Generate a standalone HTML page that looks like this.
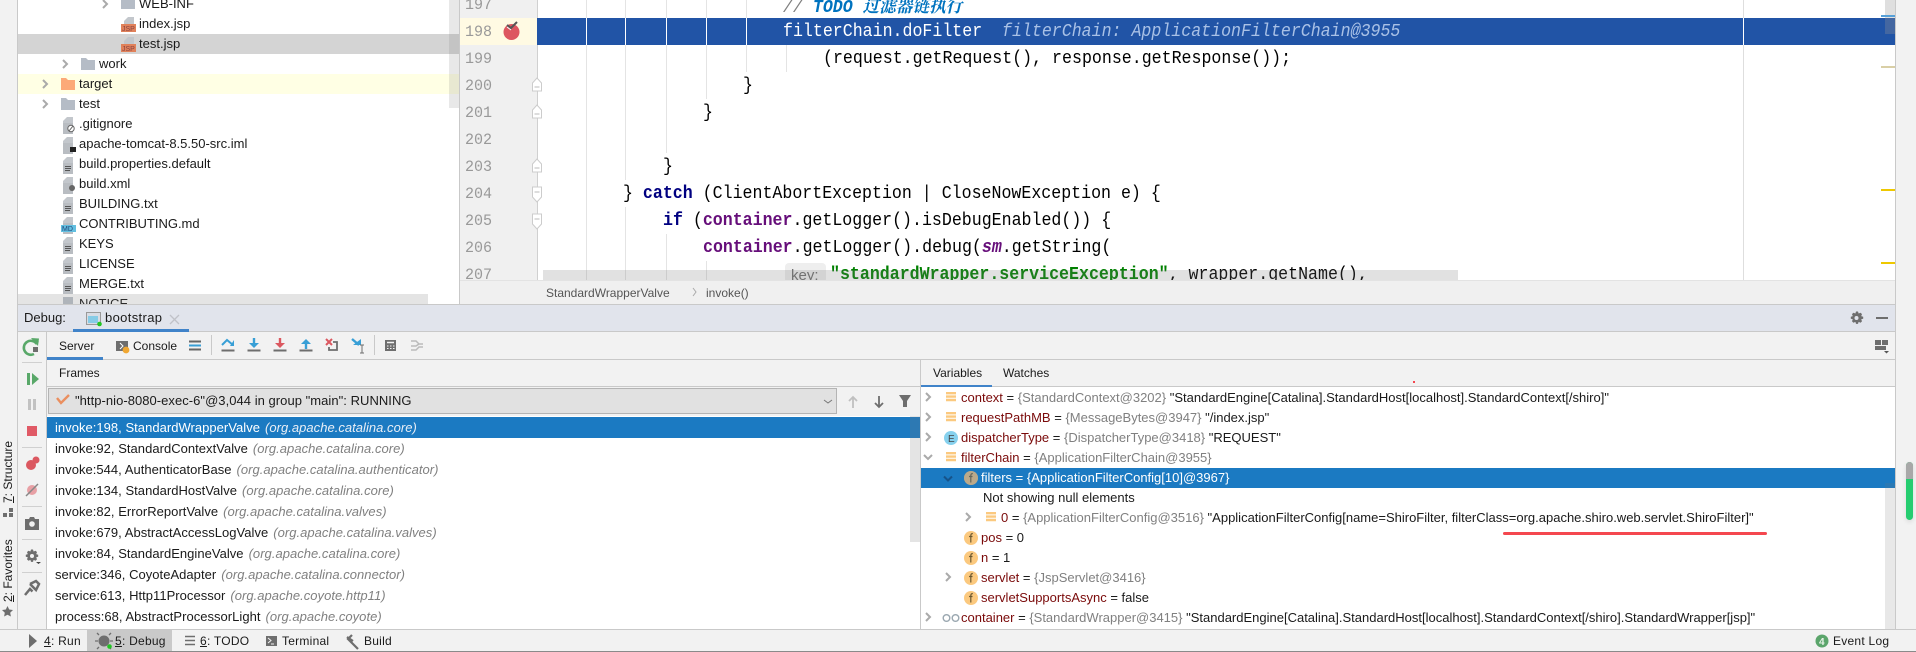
<!DOCTYPE html>
<html><head><meta charset="utf-8"><style>
*{margin:0;padding:0;box-sizing:border-box}
html,body{width:1916px;height:652px;overflow:hidden;background:#f2f2f2}
body{position:relative;font:13px/20px "Liberation Sans","Noto Sans CJK SC",sans-serif;color:#1a1a1a}
.b{position:absolute}
.t{position:absolute;white-space:pre;height:20px;line-height:20px}
.st{font-size:12px;letter-spacing:.25px}
.c{position:absolute;white-space:pre;font:18px/27px "Liberation Mono","Noto Sans CJK SC",monospace;color:#000;height:27px;margin-top:1px;transform:scaleX(.922);transform-origin:0 0}
.n{position:absolute;left:465px;font:16px/27px "Liberation Mono",monospace;color:#999;height:27px;margin-top:1px;transform:scaleX(.94);transform-origin:0 0}
.k{color:#000080;font-weight:700}.f{color:#660e7a;font-weight:700}
.i{font-style:italic;color:#808080}
.fr{position:absolute;left:55px;white-space:pre;height:21px;line-height:21px;letter-spacing:.03px}
.fr i{color:#808080;margin-left:5px}
.v{position:absolute;white-space:pre;height:20px;line-height:20px;margin-top:1px}
.v u{text-decoration:none;color:#7a0a0a}.v s{text-decoration:none;color:#808080}
svg{position:absolute;left:0;top:0}
u.ul{text-decoration:underline;color:inherit}
</style></head><body>

<!-- project tree -->
<div class="b" style="left:18px;top:0;width:441px;height:304px;background:#fff"></div>
<div class="b" style="left:18px;top:34px;width:441px;height:20px;background:#d4d4d4"></div>
<div class="b" style="left:18px;top:74px;width:441px;height:20px;background:#ffffe4"></div>
<div class="b" style="left:449px;top:0;width:10px;height:108px;background:rgba(120,120,120,.17)"></div>
<div class="b" style="left:17px;top:0;width:1px;height:630px;background:#c9c9c9"></div>
<div class="b" style="left:459px;top:0;width:1px;height:304px;background:#c9c9c9"></div>
<div class="t" style="left:139px;top:-6px">WEB-INF</div>
<div class="t" style="left:139px;top:14px">index.jsp</div>
<div class="t" style="left:139px;top:34px">test.jsp</div>
<div class="t" style="left:99px;top:54px">work</div>
<div class="t" style="left:79px;top:74px">target</div>
<div class="t" style="left:79px;top:94px">test</div>
<div class="t" style="left:79px;top:114px">.gitignore</div>
<div class="t" style="left:79px;top:134px">apache-tomcat-8.5.50-src.iml</div>
<div class="t" style="left:79px;top:154px">build.properties.default</div>
<div class="t" style="left:79px;top:174px">build.xml</div>
<div class="t" style="left:79px;top:194px">BUILDING.txt</div>
<div class="t" style="left:79px;top:214px">CONTRIBUTING.md</div>
<div class="t" style="left:79px;top:234px">KEYS</div>
<div class="t" style="left:79px;top:254px">LICENSE</div>
<div class="t" style="left:79px;top:274px">MERGE.txt</div>
<div class="b" style="left:18px;top:294px;width:441px;height:10px;overflow:hidden"><div class="t" style="left:61px;top:0">NOTICE</div></div>
<div class="b" style="left:18px;top:294px;width:410px;height:10px;background:rgba(120,120,120,.2)"></div>

<!-- editor -->
<div class="b" style="left:460px;top:0;width:77px;height:280px;background:#f0f0f0"></div>
<div class="b" style="left:460px;top:18px;width:77px;height:27px;background:#fffae3"></div>
<div class="b" style="left:537px;top:0;width:1358px;height:280px;background:#fff;border-left:1px solid #d0d0d0"></div>
<div class="b" style="left:537px;top:18px;width:1358px;height:27px;background:#2154a6"></div>
<div class="b" style="left:1743px;top:0;width:1px;height:280px;background:#dedede"></div>
<div class="b" style="left:1743px;top:18px;width:1px;height:27px;background:#fff"></div>

<!-- indent guides -->
<div class="b" style="left:586px;top:0;width:1px;height:280px;background:#e4e4e4"></div>
<div class="b" style="left:625px;top:0;width:1px;height:180px;background:#e4e4e4"></div>
<div class="b" style="left:625px;top:207px;width:1px;height:73px;background:#e4e4e4"></div>
<div class="b" style="left:666px;top:0;width:1px;height:153px;background:#e4e4e4"></div>
<div class="b" style="left:666px;top:234px;width:1px;height:46px;background:#e4e4e4"></div>
<div class="b" style="left:706px;top:0;width:1px;height:99px;background:#e4e4e4"></div>
<div class="b" style="left:706px;top:261px;width:1px;height:19px;background:#e4e4e4"></div>
<div class="b" style="left:746px;top:0;width:1px;height:72px;background:#e4e4e4"></div>
<div class="b" style="left:786px;top:45px;width:1px;height:27px;background:#e4e4e4"></div>
<div class="b" style="left:586px;top:18px;width:1px;height:27px;background:#fff"></div>
<div class="b" style="left:625px;top:18px;width:1px;height:27px;background:#fff"></div>
<div class="b" style="left:666px;top:18px;width:1px;height:27px;background:#fff"></div>
<div class="b" style="left:706px;top:18px;width:1px;height:27px;background:#fff"></div>
<div class="b" style="left:746px;top:18px;width:1px;height:27px;background:#fff"></div>

<div class="n" style="top:-9px">197</div>
<div class="n" style="top:18px">198</div>
<div class="n" style="top:45px">199</div>
<div class="n" style="top:72px">200</div>
<div class="n" style="top:99px">201</div>
<div class="n" style="top:126px">202</div>
<div class="n" style="top:153px">203</div>
<div class="n" style="top:180px">204</div>
<div class="n" style="top:207px">205</div>
<div class="n" style="top:234px">206</div>
<div class="b" style="left:460px;top:261px;width:1400px;height:19px;overflow:hidden">
<div class="n" style="left:5px;top:0">207</div>
<div class="b" style="left:325px;top:2px;width:41px;height:20px;background:#eeeeee;border-radius:4px"></div>
<div class="c" style="left:331px;top:0;font:15px/27px 'Liberation Sans',sans-serif;color:#707070;transform:none">key:</div>
<div class="c" style="left:370px;top:0"><span style="color:#008000;font-weight:700">"standardWrapper.serviceException"</span>, wrapper.getName(),</div>
</div>

<div class="c" style="left:783px;top:-9px"><span class="i">// </span><span style="color:#0073bf;font-weight:700;font-style:italic">TODO <span style="font-family:'Noto Serif CJK SC','Noto Sans CJK SC',serif">过滤器链执行</span></span></div>
<div class="c" style="left:783px;top:18px;color:#fff">filterChain.doFilter</div>
<div class="c" style="left:1002px;top:18px;color:#a9c1e6;font-style:italic">filterChain: ApplicationFilterChain@3955</div>
<div class="c" style="left:823px;top:45px">(request.getRequest(), response.getResponse());</div>
<div class="c" style="left:743px;top:72px">}</div>
<div class="c" style="left:703px;top:99px">}</div>
<div class="c" style="left:663px;top:153px">}</div>
<div class="c" style="left:623px;top:180px">} <span class="k">catch</span> (ClientAbortException | CloseNowException e) {</div>
<div class="c" style="left:663px;top:207px"><span class="k">if</span> (<span class="f">container</span>.getLogger().isDebugEnabled()) {</div>
<div class="c" style="left:703px;top:234px"><span class="f">container</span>.getLogger().debug(<span class="f" style="font-style:italic">sm</span>.getString(</div>

<!-- editor scrollbars, markers -->
<div class="b" style="left:543px;top:270px;width:915px;height:10px;background:rgba(120,120,120,.22)"></div>
<div class="b" style="left:1885px;top:0;width:10px;height:34px;background:rgba(150,150,150,.3)"></div>
<div class="b" style="left:1881px;top:15px;width:14px;height:2px;background:#56a0d8"></div>
<div class="b" style="left:1881px;top:66px;width:14px;height:2px;background:#d9cfa6"></div>
<div class="b" style="left:1881px;top:189px;width:14px;height:2px;background:#eec800"></div>
<div class="b" style="left:1881px;top:262px;width:14px;height:2px;background:#eec800"></div>

<!-- breadcrumb -->
<div class="b" style="left:460px;top:280px;width:1435px;height:24px;background:#f0f0f0;border-top:1px solid #e3e3e3"></div>
<div class="t" style="left:546px;top:283px;font-size:12px;color:#555">StandardWrapperValve</div>
<div class="t" style="left:706px;top:283px;font-size:12px;color:#555">invoke()</div>

<!-- right strip -->
<div class="b" style="left:1895px;top:0;width:1px;height:630px;background:#c9c9c9"></div>

<!-- debug header -->
<div class="b" style="left:18px;top:304px;width:1877px;height:28px;background:#e1e4ec;border-top:1px solid #c9c9c9;border-bottom:1px solid #c9c9c9"></div>
<div class="t" style="left:24px;top:308px">Debug:</div>
<div class="t" style="left:105px;top:308px;letter-spacing:.35px">bootstrap</div>
<div class="b" style="left:73px;top:329px;width:116px;height:3px;background:#4083c9"></div>

<!-- debug toolbar -->
<div class="b" style="left:18px;top:332px;width:29px;height:298px;background:#f2f2f2;border-right:1px solid #c9c9c9"></div>
<div class="b" style="left:47px;top:359px;width:1848px;height:1px;background:#c9c9c9"></div>
<div class="t" style="left:59px;top:336px;font-size:12px">Server</div>
<div class="t" style="left:133px;top:336px;font-size:12px">Console</div>
<div class="b" style="left:47px;top:357px;width:56px;height:3px;background:#4083c9"></div>

<!-- frames -->
<div class="t" style="left:59px;top:363px;font-size:12px">Frames</div>
<div class="b" style="left:47px;top:386px;width:873px;height:1px;background:#c9c9c9"></div>
<div class="b" style="left:48px;top:388px;width:789px;height:26px;background:#e1e1e1;border:1px solid #b4b4b4"></div>
<div class="t" style="left:75px;top:391px;letter-spacing:.04px">"http-nio-8080-exec-6"@3,044 in group "main": RUNNING</div>
<div class="b" style="left:47px;top:416px;width:873px;height:214px;background:#fff"></div>
<div class="b" style="left:47px;top:417px;width:873px;height:21px;background:#1b7ac2"></div>
<div class="b" style="left:910px;top:416px;width:10px;height:126px;background:rgba(120,120,120,.2)"></div>
<div class="fr" style="top:417px;color:#fff">invoke:198, StandardWrapperValve<i style="color:#e8eef6">(org.apache.catalina.core)</i></div>
<div class="fr" style="top:438px">invoke:92, StandardContextValve<i>(org.apache.catalina.core)</i></div>
<div class="fr" style="top:459px">invoke:544, AuthenticatorBase<i>(org.apache.catalina.authenticator)</i></div>
<div class="fr" style="top:480px">invoke:134, StandardHostValve<i>(org.apache.catalina.core)</i></div>
<div class="fr" style="top:501px">invoke:82, ErrorReportValve<i>(org.apache.catalina.valves)</i></div>
<div class="fr" style="top:522px">invoke:679, AbstractAccessLogValve<i>(org.apache.catalina.valves)</i></div>
<div class="fr" style="top:543px">invoke:84, StandardEngineValve<i>(org.apache.catalina.core)</i></div>
<div class="fr" style="top:564px">service:346, CoyoteAdapter<i>(org.apache.catalina.connector)</i></div>
<div class="fr" style="top:585px">service:613, Http11Processor<i>(org.apache.coyote.http11)</i></div>
<div class="fr" style="top:606px">process:68, AbstractProcessorLight<i>(org.apache.coyote)</i></div>

<!-- variables -->
<div class="b" style="left:920px;top:360px;width:1px;height:270px;background:#c9c9c9"></div>
<div class="t" style="left:933px;top:363px;font-size:12px">Variables</div>
<div class="t" style="left:1003px;top:363px;font-size:12px">Watches</div>
<div class="b" style="left:921px;top:385px;width:71px;height:2px;background:#4083c9"></div>
<div class="b" style="left:992px;top:386px;width:903px;height:1px;background:#c9c9c9"></div>
<div class="b" style="left:921px;top:387px;width:974px;height:243px;background:#fff"></div>
<div class="b" style="left:921px;top:468px;width:974px;height:20px;background:#1b7ac2"></div>
<div class="b" style="left:1885px;top:483px;width:10px;height:147px;background:rgba(120,120,120,.17)"></div>
<div class="v" style="left:961px;top:387px"><u>context</u> = <s>{StandardContext@3202}</s> "StandardEngine[Catalina].StandardHost[localhost].StandardContext[/shiro]"</div>
<div class="v" style="left:961px;top:407px"><u>requestPathMB</u> = <s>{MessageBytes@3947}</s> "/index.jsp"</div>
<div class="v" style="left:961px;top:427px"><u>dispatcherType</u> = <s>{DispatcherType@3418}</s> "REQUEST"</div>
<div class="v" style="left:961px;top:447px"><u>filterChain</u> = <s>{ApplicationFilterChain@3955}</s></div>
<div class="v" style="left:981px;top:467px;color:#fff">filters = {ApplicationFilterConfig[10]@3967}</div>
<div class="v" style="left:983px;top:487px">Not showing null elements</div>
<div class="v" style="left:1001px;top:507px"><u>0</u> = <s>{ApplicationFilterConfig@3516}</s> "ApplicationFilterConfig[name=ShiroFilter, filterClass=org.apache.shiro.web.servlet.ShiroFilter]"</div>
<div class="v" style="left:981px;top:527px"><u>pos</u> = 0</div>
<div class="v" style="left:981px;top:547px"><u>n</u> = 1</div>
<div class="v" style="left:981px;top:567px"><u>servlet</u> = <s>{JspServlet@3416}</s></div>
<div class="v" style="left:981px;top:587px"><u>servletSupportsAsync</u> = false</div>
<div class="v" style="left:961px;top:607px"><u>container</u> = <s>{StandardWrapper@3415}</s> "StandardEngine[Catalina].StandardHost[localhost].StandardContext[/shiro].StandardWrapper[jsp]"</div>
<div class="b" style="left:1503px;top:532px;width:264px;height:3px;background:#f4474f;border-radius:2px"></div>
<div class="b" style="left:1413px;top:381px;width:2px;height:2px;background:#f4474f"></div>

<!-- vertical labels -->
<div class="t" style="left:-22px;top:463px;width:60px;transform:rotate(-90deg);font-size:12px"><u class="ul">7</u>: Structure</div>
<div class="t" style="left:-22px;top:562px;width:60px;transform:rotate(-90deg);font-size:12px"><u class="ul">2</u>: Favorites</div>

<!-- status bar -->
<div class="b" style="left:0;top:629px;width:1916px;height:23px;background:#f2f2f2;border-top:1px solid #c9c9c9;border-bottom:1px solid #8a8a8a"></div>
<div class="b" style="left:87px;top:630px;width:85px;height:21px;background:#c9c9c9"></div>
<div class="t st" style="left:44px;top:631px"><u class="ul">4</u>: Run</div>
<div class="t st" style="left:115px;top:631px"><u class="ul">5</u>: Debug</div>
<div class="t st" style="left:200px;top:631px"><u class="ul">6</u>: TODO</div>
<div class="t st" style="left:282px;top:631px">Terminal</div>
<div class="t st" style="left:364px;top:631px">Build</div>
<div class="t st" style="left:1833px;top:631px">Event Log</div>

<!-- green memory bar -->
<div class="b" style="left:1906px;top:462px;width:7px;height:58px;border-radius:4px;background:#25cd70;box-shadow:0 2px 5px rgba(0,0,0,.1)"></div>
<div class="b" style="left:1906px;top:462px;width:7px;height:17px;border-radius:4px 4px 0 0;background:#a8a8a8"></div>

<svg width="1916" height="652" viewBox="0 0 1916 652" fill="none">
<defs>
<g id="rt"><path d="M-2-4 2 0-2 4" stroke="#aaa" stroke-width="2"/></g>
<g id="dn"><path d="M-4-2 0 2 4-2" stroke="#aaa" stroke-width="2"/></g>
<g id="fd"><path d="M0 0h5l2 2h7v10H0z" fill="#b5bcc6"/></g>
<g id="fl"><path d="M4 0h6v6H0V4z" fill="#c3c7cc"/><path d="M0 6h10v11H0z" fill="#b9bdc2"/><path d="M2 9.500h6M2 11.500h6M2 13.500h5" stroke="#555" stroke-width="1"/></g>
<g id="fb"><path d="M4 0h6v6H0V4z" fill="#c3c7cc"/><path d="M0 6h10v11H0z" fill="#b9bdc2"/></g>
<g id="jsp"><path d="M7 0h6v7H3V4z" fill="#c3c7cc"/><rect y="7" width="15" height="8" fill="#e0815a"/></g>
<g id="fi"><path d="M0 0h10v2.400H0zM0 3.400h10v2.400H0zM0 6.800h10v2.400H0z" fill="#fbc97f"/></g>
<g id="fc"><circle r="7" fill="#fbc97f"/><path d="M1.800-4.500C.2-4.500-.2-3.500-.2-2.300V4.500M-2-1.500H1.500" stroke="#6d5a32" stroke-width="1.200"/></g>
<g id="fm"><path d="M-4.500-3 0-8 4.500-3V5h-9z" fill="#fff" stroke="#ccc"/><path d="M-2.500 1h5" stroke="#bbb"/></g>
<g id="fo"><path d="M-4.500-7h9V3L0 8-4.500 3z" fill="#fff" stroke="#ccc"/><path d="M-2.500-2h5" stroke="#bbb"/></g>
</defs>

<!-- tree chevrons + folders -->
<use href="#rt" x="105" y="4"/><use href="#rt" x="65" y="64"/><use href="#rt" x="45" y="84"/><use href="#rt" x="45" y="104"/>
<use href="#fd" x="121" y="-3"/><use href="#fd" x="81" y="58"/><use href="#fd" x="61" y="98"/>
<path d="M61 78h5l2 2h7v10H61z" fill="#fca978"/>
<use href="#jsp" x="121" y="17"/><use href="#jsp" x="121" y="37"/>
<text x="122" y="31" font-family="Liberation Sans" font-size="7" fill="#844">JSP</text>
<text x="122" y="51" font-family="Liberation Sans" font-size="7" fill="#844">JSP</text>
<use href="#fb" x="63" y="117"/><circle cx="71" cy="128.500" r="3.200" stroke="#666" fill="#fff"/><path d="M69 131l4-5" stroke="#666"/>
<use href="#fb" x="63" y="137"/><rect x="70" y="147" width="6" height="5" fill="#222"/>
<use href="#fl" x="63" y="157"/>
<use href="#fb" x="63" y="177"/><circle cx="72" cy="188" r="3" fill="#666"/>
<use href="#fl" x="63" y="197"/>
<use href="#fb" x="63" y="217"/><rect x="61" y="225" width="15" height="7" fill="#62bfe0"/>
<text x="62" y="231" font-family="Liberation Sans" font-size="7" fill="#247">MD</text>
<use href="#fl" x="63" y="237"/><use href="#fl" x="63" y="257"/><use href="#fl" x="63" y="277"/>
<path d="M63 297h10v7H63z" fill="#afb4ba"/>

<!-- gutter -->
<circle cx="511.500" cy="32" r="8" fill="#dd5660"/>
<path d="M507 25l4 3 6-6" stroke="#555" stroke-width="2"/><path d="M507 27l4 3" stroke="#fff" stroke-width="1"/>
<use href="#fm" x="537" y="86"/><use href="#fm" x="537" y="113"/><use href="#fm" x="537" y="167"/>
<use href="#fo" x="537" y="194"/><use href="#fo" x="537" y="221"/>
<path d="M693 288l3 4-3 4" stroke="#aaa"/>

<!-- debug header icons -->
<rect x="86.500" y="312.500" width="14" height="12" fill="#d8dce4" stroke="#999"/><rect x="88" y="316" width="10" height="7" fill="#86cbe6"/><circle cx="99.500" cy="324" r="2.300" fill="#22c422"/>
<path d="M170 315l9 9M179 315l-9 9" stroke="#c0c2c8" stroke-width="1.300"/>
<path d="M1856 311.500l2 0 .6 2 2-.8 1.400 1.400-.8 2 2 .6v2l-2 .6.8 2-1.400 1.400-2-.8-.6 2h-2l-.6-2-2 .8-1.400-1.400.8-2-2-.6v-2l2-.6-.8-2 1.400-1.400 2 .8z" fill="#6e6e6e"/><circle cx="1856.500" cy="318" r="2" fill="#e1e4ec"/>
<path d="M1876 318h12" stroke="#6e6e6e" stroke-width="2"/>

<!-- left toolbar -->
<path d="M38 341l-2 2a7 7 0 1 0-2 11" stroke="#59a869" stroke-width="2.600"/><path d="M31 338l8 .5-1 7.500z" fill="#59a869"/><rect x="33" y="347" width="5" height="5" fill="#6e6e6e"/>
<path d="M27 373h3v12h-3z" fill="#59a869"/><path d="M32 373l7 6-7 6z" fill="#59a869"/>
<path d="M28 399h3v11h-3zM33 399h3v11h-3z" fill="#c2c2c2"/>
<rect x="27" y="426" width="10" height="10" fill="#e05a66"/>
<circle cx="31" cy="465" r="5" fill="#db5860"/><circle cx="36" cy="460" r="3.500" fill="#db5860"/>
<circle cx="32" cy="490" r="5" fill="#e8a0a5"/><path d="M26 496l12-12" stroke="#888" stroke-width="1.500"/>
<path d="M25 519h4l1-2h4l1 2h4v11H25z" fill="#6e6e6e"/><circle cx="32" cy="524" r="2.800" fill="#f2f2f2"/>
<path d="M31 549.500l2 0 .6 2 2-.8 1.400 1.400-.8 2 2 .6v2l-2 .6.8 2-1.400 1.400-2-.8-.6 2h-2l-.6-2-2 .8-1.400-1.400.8-2-2-.6v-2l2-.6-.8-2 1.400-1.400 2 .8z" fill="#6e6e6e"/><circle cx="32" cy="556" r="2" fill="#f2f2f2"/><path d="M36 562h5l-2.500 2z" fill="#444"/>
<path d="M25 595l5-6 2.500 2.500M30 584l6-3 3 3-3 6-6-6" stroke="#6e6e6e" stroke-width="2.500"/>
<path d="M22 362.500h20M22 447.500h20M22 506.500h20M22 539.500h20M22 572.500h20" stroke="#d0d0d0"/>

<!-- strip icons -->
<path d="M3 513h4v4H3zM9 513h4v4H9zM9 508h4v4H9z" fill="#6e6e6e"/>
<path d="M7.500 606l1.700 3.500 3.800.5-2.800 2.700.7 3.800-3.400-1.800-3.400 1.800.7-3.800L2 610l3.800-.5z" fill="#6e6e6e"/>

<!-- debug toolbar icons -->
<rect x="116" y="341" width="12" height="10" fill="#6e6e6e"/><path d="M120 343l3 3-3 3" stroke="#fff"/><circle cx="126" cy="350" r="3.400" fill="#f0a732"/>
<path d="M189 341.500h12" stroke="#666" stroke-width="2"/><path d="M189 345.500h12" stroke="#389fd6" stroke-width="2"/><path d="M189 349.500h12" stroke="#666" stroke-width="2"/>
<path d="M211.500 335v20" stroke="#c9c9c9"/>
<path d="M222 345l5-5 6 5" stroke="#389fd6" stroke-width="2"/><path d="M234 340v6h-4z" fill="#389fd6"/><path d="M221.500 350.500h13" stroke="#6e6e6e" stroke-width="2"/>
<path d="M254 338v7" stroke="#389fd6" stroke-width="2.400"/><path d="M249 343h10l-5 5z" fill="#389fd6"/><path d="M247.500 350.500h13" stroke="#6e6e6e" stroke-width="2"/>
<path d="M280 338v7" stroke="#db5860" stroke-width="2.400"/><path d="M275 343h10l-5 5z" fill="#db5860"/><path d="M273.500 350.500h13" stroke="#6e6e6e" stroke-width="2"/>
<path d="M306 349v-7" stroke="#389fd6" stroke-width="2.400"/><path d="M301 344h10l-5-5z" fill="#389fd6"/><path d="M299.500 350.500h13" stroke="#6e6e6e" stroke-width="2"/>
<path d="M326 339l6 6M332 339l-6 6" stroke="#db5860" stroke-width="2"/><path d="M333 342h4v8h-8v-3" stroke="#6e6e6e" stroke-width="1.800"/>
<path d="M352 339l7 6" stroke="#389fd6" stroke-width="2.400"/><path d="M353 345h8v-6z" fill="#389fd6"/><path d="M360 345h4M362 345v8M360 353h4" stroke="#6e6e6e"/>
<path d="M374.500 335v20" stroke="#c9c9c9"/>
<rect x="385" y="340" width="11" height="11" fill="#6e6e6e"/><path d="M387 342.500h7" stroke="#f2f2f2" stroke-width="1.500"/><path d="M387 346h1.500M390 346h1.500M393 346h1.500M387 348.500h1.500M390 348.500h1.500M393 348.500h1.500" stroke="#f2f2f2"/>
<path d="M411 341h5l3 3h4M411 346h5l3-2M411 350h5l3-3h4" stroke="#bbb" stroke-width="1.500"/>
<path d="M1875 340h6v5h-6zM1882 340h6v5h-6zM1875 346h11v4h-11z" fill="#6e6e6e"/><path d="M1884 351h5l-2.500 2.500z" fill="#555"/>

<!-- combo -->
<path d="M57 398l4 5 8-8" stroke="#ea8f5f" stroke-width="2.400"/>
<path d="M824 400l4 3 4-3" stroke="#777"/>
<path d="M853 408v-11M849 401l4-4 4 4" stroke="#c0c0c0" stroke-width="1.800"/>
<path d="M879 396v11M875 403l4 4 4-4" stroke="#6e6e6e" stroke-width="1.800"/>
<path d="M899 395h12l-4 6v6h-4v-6z" fill="#6e6e6e"/>

<!-- variable icons -->
<use href="#rt" x="928" y="397"/><use href="#rt" x="928" y="417"/><use href="#rt" x="928" y="437"/><use href="#dn" x="928" y="457"/>
<path d="M944 476.500l4 4 4-4" stroke="#16538a" stroke-width="2"/>
<use href="#rt" x="968" y="517"/><use href="#rt" x="948" y="577"/><use href="#rt" x="928" y="617"/>
<use href="#fi" x="946" y="392"/><use href="#fi" x="946" y="412"/><use href="#fi" x="946" y="452"/><use href="#fi" x="986" y="512"/>
<circle cx="951" cy="438" r="7" fill="#86d1ee"/><text x="948" y="442" font-family="Liberation Sans" font-size="10" fill="#444">E</text>
<use href="#fc" x="971" y="478"/><circle cx="971" cy="478" r="7" fill="#5c7a9a" opacity=".4"/>
<use href="#fc" x="971" y="538"/><use href="#fc" x="971" y="558"/><use href="#fc" x="971" y="578"/><use href="#fc" x="971" y="598"/>
<circle cx="946.500" cy="618" r="3.300" stroke="#9aa7b0" stroke-width="1.400"/><circle cx="955.500" cy="618" r="3.300" stroke="#9aa7b0" stroke-width="1.400"/>

<!-- status icons -->
<path d="M29 634l8 7-8 7z" fill="#6e6e6e"/>
<circle cx="104" cy="641" r="5.500" fill="#6e6e6e"/><path d="M99 635l-2-2M109 635l2-2M98 641h-3M110 641h3M99 647l-2 2M109 647l2 2" stroke="#6e6e6e" stroke-width="1.300"/><circle cx="109.500" cy="646.500" r="2.300" fill="#22c422"/>
<path d="M185 636.500h10M185 640.500h10M185 644.500h10" stroke="#6e6e6e" stroke-width="1.500"/>
<rect x="266" y="636" width="11" height="10" fill="#6e6e6e"/><path d="M268 638l3 2.500-3 2.500M271 644h3" stroke="#f2f2f2"/>
<path d="M347 637l6 4M352 635l-4 4 10 10" stroke="#6e6e6e" stroke-width="2.200"/>
<circle cx="1822" cy="641" r="6.500" fill="#5ba56b"/><text x="1819" y="645" font-family="Liberation Sans" font-size="10" font-weight="700" fill="#e8f2e8">4</text>
</svg>
</body></html>
